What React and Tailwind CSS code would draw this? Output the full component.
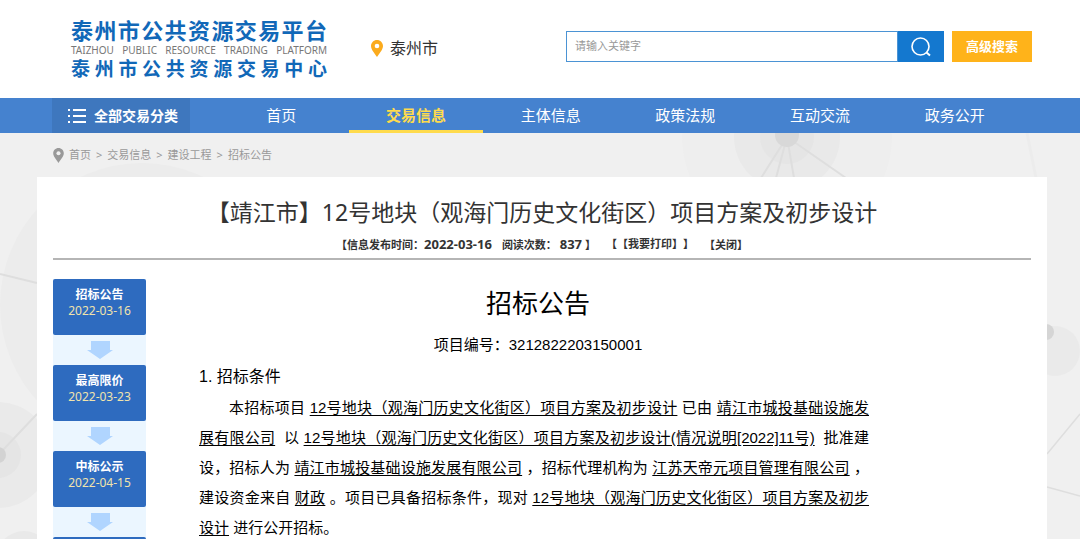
import React from "react";

const navItems = ["首页", "交易信息", "主体信息", "政策法规", "互动交流", "政务公开"];
const crumbs = ["首页", "交易信息", "建设工程", "招标公告"];
const steps = [
  { name: "招标公告", date: "2022-03-16" },
  { name: "最高限价", date: "2022-03-23" },
  { name: "中标公示", date: "2022-04-15" },
];

function Pin({ className, hole }) {
  return (
    <svg viewBox="0 0 12 17" className={className} aria-hidden="true">
      <path
        d="M6 0C2.7 0 0 2.7 0 6c0 3.600 3.200 6.600 6 11 2.800-4.400 6-7.400 6-11 0-3.300-2.700-6-6-6z"
        fill="currentColor"
      />
      <circle cx="6" cy="6" r="2.300" fill={hole} />
    </svg>
  );
}

function Backdrop() {
  return (
    <svg className="absolute inset-0 h-[406px] w-[1080px]" viewBox="0 0 1080 406" aria-hidden="true">
      <circle cx="142" cy="172" r="142" fill="#ececec" />
      <circle cx="-2" cy="322" r="53" fill="#eaeaea" />
      <circle cx="-2" cy="322" r="23" fill="#e5e5e5" />
      <circle cx="24" cy="426" r="28" fill="#e9e9e9" />
      <circle cx="787" cy="4" r="105" fill="#eeeeee" />
      <circle cx="787" cy="4" r="53" fill="#e9e9e9" />
      <circle cx="787" cy="4" r="27" fill="#e5e5e5" />
      <circle cx="1055" cy="218" r="25" fill="#eaeaea" />
      <g stroke="#dedede" strokeWidth="2" fill="none">
        <path d="M0 141 37 150M2 318 37 281" />
        <path d="M787 4 761 45M787 4 776 45M787 4 794 45M787 4 846 45" />
        <path d="M1047 321 1080 281M1047 354 1080 363" strokeWidth="1.500" />
      </g>
      <path d="M1027 0 1036 45" stroke="#ececec" strokeWidth="3" />
      <circle cx="787" cy="2" r="12" fill="#d8d8d8" />
      <circle cx="-2" cy="322" r="8" fill="#d3d3d3" />
      <circle cx="1046" cy="199" r="8" fill="#d5d5d5" />
    </svg>
  );
}

function Header() {
  return (
    <header className="flex h-[98px] items-start bg-white pr-12 pl-[71px]">
      <div className="mt-4 w-64 shrink-0 font-bold text-[#1168b8] [text-align-last:justify]">
        <div className="text-[22px] leading-7">泰州市公共资源交易平台</div>
        <div className="text-[10px] leading-3 font-normal whitespace-nowrap text-[#777]">
          TAIZHOU PUBLIC RESOURCE TRADING PLATFORM
        </div>
        <div className="text-[19px] leading-[26px]">泰州市公共资源交易中心</div>
      </div>
      <div className="mt-9 ml-11 flex shrink-0 items-center gap-[7px] text-base text-[#333]">
        <Pin className="h-[17px] w-3 text-[#fbab1d]" hole="#fff" />
        <span>泰州市</span>
      </div>
      <form className="mt-[31px] ml-auto flex w-[466px] gap-2" onSubmit={(e) => e.preventDefault()}>
        <div className="flex h-[31px] flex-1">
          <input
            type="text"
            aria-label="请输入关键字"
            placeholder="请输入关键字"
            className="min-w-0 flex-1 border border-[#4b93d4] bg-white px-2 text-[11px] outline-none placeholder:text-[#999]"
          />
          <button type="submit" aria-label="搜索" className="flex w-[46px] items-center justify-center bg-[#1478cf]">
            <svg viewBox="0 0 20 20" className="size-5" fill="none" stroke="#fff" strokeWidth="1.600" aria-hidden="true">
              <circle cx="9.500" cy="9.500" r="8.500" />
              <path d="m15.500 15.500 3.500 3" strokeWidth="2" />
            </svg>
          </button>
        </div>
        <button type="button" className="h-[31px] w-20 bg-[#ffb31a] text-[13px] font-bold text-white">
          高级搜索
        </button>
      </form>
    </header>
  );
}

function Nav() {
  return (
    <nav className="flex h-[35px] bg-[#4582cf] pr-[58px] pl-[52px] text-white">
      <a href="#all" className="mr-6 flex w-[138px] shrink-0 items-center gap-2 bg-[#3e77be] pl-4 text-sm font-bold">
        <svg viewBox="0 0 18 16" className="h-4 w-[18px]" fill="#fff" aria-hidden="true">
          <path d="M0 1h2v2H0zM0 7h2v2H0zM0 13h2v2H0zM5 1h13v2H5zM5 7h13v2H5zM5 13h13v2H5z" />
        </svg>
        全部交易分类
      </a>
      {navItems.map((item) => (
        <a
          key={item}
          href={`#${item}`}
          className={
            item === "交易信息"
              ? "flex flex-1 items-center justify-center border-y-3 border-t-transparent border-b-[#ffdb4d] text-[15px] font-bold text-[#ffdb4d]"
              : "flex flex-1 items-center justify-center text-[15px]"
          }
        >
          {item}
        </a>
      ))}
    </nav>
  );
}

function Steps() {
  return (
    <aside className="w-[93px] shrink-0 bg-[#ebf6ff] text-center text-xs leading-4">
      {steps.map((step) => (
        <React.Fragment key={step.date}>
          <a href={`#${step.name}`} className="block h-14 rounded-xs bg-[#2e6bbf] pt-2">
            <span className="block font-bold text-white">{step.name}</span>
            <span className="block text-[#f0e3ac]">{step.date}</span>
          </a>
          <div className="flex h-[30px] items-center justify-center">
            <svg viewBox="0 0 26 18" className="h-[18px] w-[26px]" aria-hidden="true">
              <path d="M4 0h19v9h3L13 18 0 9h4z" fill="#b0d5ff" />
            </svg>
          </div>
        </React.Fragment>
      ))}
      <div className="h-14 rounded-xs bg-[#2e6bbf]" />
    </aside>
  );
}

function Notice() {
  return (
    <article className="min-w-0 flex-1 pr-[154px] pl-[53px] font-['Liberation_Sans','Noto_Sans_CJK_SC',sans-serif] text-black">
      <h2 className="mt-2 text-center text-[26px] leading-[34px]">招标公告</h2>
      <p className="mt-3 text-center text-[15px] leading-6">项目编号：3212822203150001</p>
      <p className="mt-2 text-base leading-6">1. 招标条件</p>
      <p className="mt-1 pr-2 indent-[30px] text-justify text-[15px] leading-[30px] [&_u]:underline-offset-2">
        本招标项目 <u>12号地块（观海门历史文化街区）项目方案及初步设计</u> 已由 <u>靖江市城投基础设施发展有限公司</u>
        &nbsp; 以 <u>12号地块（观海门历史文化街区）项目方案及初步设计(情况说明[2022]11号)</u>
        &nbsp; 批准建设，招标人为 <u>靖江市城投基础设施发展有限公司</u> ，招标代理机构为{" "}
        <u>江苏天帝元项目管理有限公司</u> ，建设资金来自 <u>财政</u> 。项目已具备招标条件，现对{" "}
        <u>12号地块（观海门历史文化街区）项目方案及初步设计</u> 进行公开招标。
      </p>
    </article>
  );
}

export default function App() {
  return (
    <div
      lang="zh-CN"
      className="flex h-screen flex-col overflow-y-auto bg-[#f0f0f0] font-['Noto_Sans','Noto_Sans_CJK_SC',sans-serif] [scrollbar-width:none]"
    >
      <div className="shrink-0">
        <Header />
        <Nav />
      </div>
      <main className="relative flex-1 overflow-hidden">
        <Backdrop />
        <div className="relative">
          <div className="flex h-11 items-center gap-[5px] pl-[53px] text-[11px] text-[#999]">
            <Pin className="h-[15px] w-[11px]" hole="#f0f0f0" />
            {crumbs.map((crumb, i) => (
              <React.Fragment key={crumb}>
                {i > 0 && <span>&gt;</span>}
                <a href={`#${crumb}`}>{crumb}</a>
              </React.Fragment>
            ))}
          </div>
          <div className="mr-[33px] ml-[37px] bg-white px-4 pt-[18px]">
            <h1 className="text-center text-[23px] leading-[34px] text-[#333]">
              【靖江市】12号地块（观海门历史文化街区）项目方案及初步设计
            </h1>
            <div className="mt-[6px] flex justify-center gap-[10px] border-b-2 border-[#b5b5b5] pb-1 text-[11px] leading-[18px] font-bold text-[#333]">
              <span>
                【信息发布时间：<span className="text-[13px]">2022-03-16</span>
              </span>
              <span>
                阅读次数： <span className="text-[13px]">837</span> 】
              </span>
              <span>
                【<button type="button">【我要打印】</button>】
              </span>
              <button type="button">【关闭】</button>
            </div>
            <div className="mt-[19px] flex items-start">
              <Steps />
              <Notice />
            </div>
          </div>
        </div>
      </main>
    </div>
  );
}
